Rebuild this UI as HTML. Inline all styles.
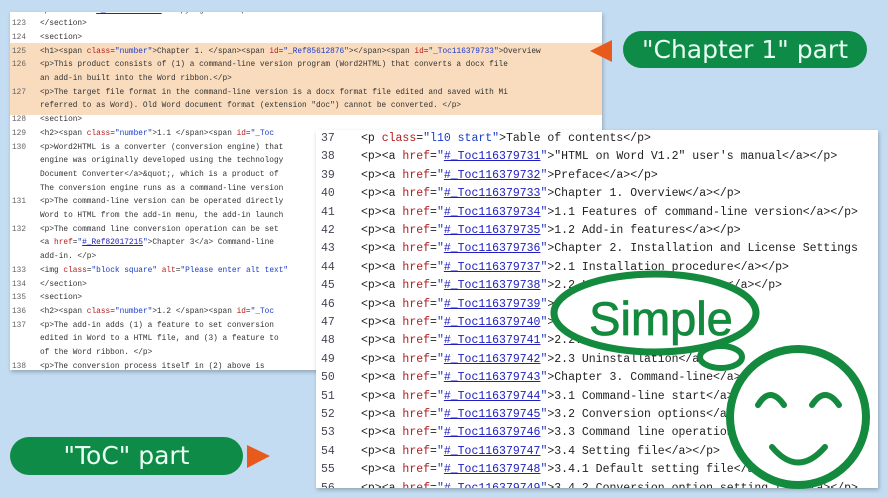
<!DOCTYPE html>
<html><head><meta charset="utf-8"><style>
body{margin:0;width:888px;height:497px;background:#c4dcf2;position:relative;overflow:hidden;font-family:"Liberation Mono",monospace}
.p{position:absolute;background:#fff;overflow:hidden;box-shadow:1px 2px 4px rgba(0,0,0,.25)}
#L{left:10px;top:12px;width:592px;height:358px}
#R{left:316px;top:130px;width:562px;height:358px}
.l{position:absolute;white-space:pre;color:#333}
#L .l{font-size:7.8px;height:13.7px;line-height:13.7px;left:30px}
#L .n{position:absolute;left:2px;font-size:7.8px;color:#666;line-height:13.7px}
#R .l{font-size:11.5px;line-height:18.4px;left:45px;color:#222}
#R .n{position:absolute;left:5px;font-size:11.5px;color:#445;line-height:18.4px}
.a{color:#b02020}.v{color:#1a3cc8}.u{color:#2020c0;text-decoration:underline}
.hl{position:absolute;left:0;top:31px;width:592px;height:72px;background:#f9dcbd}
.pill{position:absolute;background:#0e8c47;border-radius:20px;color:#e8fff4;font-family:"DejaVu Sans","Liberation Sans",sans-serif;text-align:center;font-size:25px;line-height:37px}
</style></head><body>
<div class="p" id="L">
<div class="hl"></div>
<div class="n" style="top:-7px">122</div><div class="l" style="top:-7px">&lt;p&gt;&lt;a href="<span class="u">#_Toc116379815</span>"&gt;Copyright&lt;/a&gt;&lt;/p&gt;</div>
<div class="n" style="top:6px">123</div><div class="l" style="top:6px">&lt;/section&gt;</div>
<div class="n" style="top:20px">124</div><div class="l" style="top:20px">&lt;section&gt;</div>
<div class="n" style="top:34px">125</div><div class="l" style="top:34px">&lt;h1&gt;&lt;span <span class="a">class</span>=<span class="v">"number"</span>&gt;Chapter 1. &lt;/span&gt;&lt;span <span class="a">id</span>=<span class="v">"_Ref85612876"</span>&gt;&lt;/span&gt;&lt;span <span class="a">id</span>=<span class="v">"_Toc116379733"</span>&gt;Overview</div>
<div class="n" style="top:47px">126</div><div class="l" style="top:47px">&lt;p&gt;This product consists of (1) a command-line version program (Word2HTML) that converts a docx file</div>
<div class="l" style="top:61px">an add-in built into the Word ribbon.&lt;/p&gt;</div>
<div class="n" style="top:75px">127</div><div class="l" style="top:75px">&lt;p&gt;The target file format in the command-line version is a docx format file edited and saved with Mi</div>
<div class="l" style="top:88px">referred to as Word). Old Word document format (extension "doc") cannot be converted. &lt;/p&gt;</div>
<div class="n" style="top:102px">128</div><div class="l" style="top:102px">&lt;section&gt;</div>
<div class="n" style="top:116px">129</div><div class="l" style="top:116px">&lt;h2&gt;&lt;span <span class="a">class</span>=<span class="v">"number"</span>&gt;1.1 &lt;/span&gt;&lt;span <span class="a">id</span>=<span class="v">"_Toc</span></div>
<div class="n" style="top:130px">130</div><div class="l" style="top:130px">&lt;p&gt;Word2HTML is a converter (conversion engine) that</div>
<div class="l" style="top:143px">engine was originally developed using the technology</div>
<div class="l" style="top:157px">Document Converter&lt;/a&gt;&amp;quot;, which is a product of</div>
<div class="l" style="top:171px">The conversion engine runs as a command-line version</div>
<div class="n" style="top:184px">131</div><div class="l" style="top:184px">&lt;p&gt;The command-line version can be operated directly</div>
<div class="l" style="top:198px">Word to HTML from the add-in menu, the add-in launch</div>
<div class="n" style="top:212px">132</div><div class="l" style="top:212px">&lt;p&gt;The command line conversion operation can be set</div>
<div class="l" style="top:225px">&lt;a <span class="a">href</span>=<span class="v">"</span><span class="u">#_Ref82017215</span><span class="v">"</span>&gt;Chapter 3&lt;/a&gt; Command-line</div>
<div class="l" style="top:239px">add-in. &lt;/p&gt;</div>
<div class="n" style="top:253px">133</div><div class="l" style="top:253px">&lt;img <span class="a">class</span>=<span class="v">"block square"</span> <span class="a">alt</span>=<span class="v">"Please enter alt text"</span></div>
<div class="n" style="top:267px">134</div><div class="l" style="top:267px">&lt;/section&gt;</div>
<div class="n" style="top:280px">135</div><div class="l" style="top:280px">&lt;section&gt;</div>
<div class="n" style="top:294px">136</div><div class="l" style="top:294px">&lt;h2&gt;&lt;span <span class="a">class</span>=<span class="v">"number"</span>&gt;1.2 &lt;/span&gt;&lt;span <span class="a">id</span>=<span class="v">"_Toc</span></div>
<div class="n" style="top:308px">137</div><div class="l" style="top:308px">&lt;p&gt;The add-in adds (1) a feature to set conversion</div>
<div class="l" style="top:321px">edited in Word to a HTML file, and (3) a feature to</div>
<div class="l" style="top:335px">of the Word ribbon. &lt;/p&gt;</div>
<div class="n" style="top:349px">138</div><div class="l" style="top:349px">&lt;p&gt;The conversion process itself in (2) above is</div>
</div>
<svg style="position:absolute;left:588px;top:38px" width="26" height="26"><polygon points="24,2 24,24 2,13" fill="#e85a1c"/></svg>
<div class="pill" style="left:623px;top:31px;width:244px;height:37px">"Chapter 1" part</div>
<div class="pill" style="left:10px;top:437px;width:233px;height:38px">"ToC" part</div>
<svg style="position:absolute;left:246px;top:444px" width="26" height="26"><polygon points="1,1 1,24 24,12" fill="#e85a1c"/></svg>
<div class="p" id="R">
<div class="n" style="top:0px">37</div><div class="l" style="top:0px">&lt;p <span class="a">class</span>=<span class="v">"l10 start"</span>&gt;Table of contents&lt;/p&gt;</div>
<div class="n" style="top:18.4px">38</div><div class="l" style="top:18.4px">&lt;p&gt;&lt;a <span class="a">href</span>=<span class="v">"<span class="u">#_Toc116379731</span>"</span>&gt;"HTML on Word V1.2" user's manual&lt;/a&gt;&lt;/p&gt;</div>
<div class="n" style="top:36.8px">39</div><div class="l" style="top:36.8px">&lt;p&gt;&lt;a <span class="a">href</span>=<span class="v">"<span class="u">#_Toc116379732</span>"</span>&gt;Preface&lt;/a&gt;&lt;/p&gt;</div>
<div class="n" style="top:55.2px">40</div><div class="l" style="top:55.2px">&lt;p&gt;&lt;a <span class="a">href</span>=<span class="v">"<span class="u">#_Toc116379733</span>"</span>&gt;Chapter 1. Overview&lt;/a&gt;&lt;/p&gt;</div>
<div class="n" style="top:73.6px">41</div><div class="l" style="top:73.6px">&lt;p&gt;&lt;a <span class="a">href</span>=<span class="v">"<span class="u">#_Toc116379734</span>"</span>&gt;1.1 Features of command-line version&lt;/a&gt;&lt;/p&gt;</div>
<div class="n" style="top:92px">42</div><div class="l" style="top:92px">&lt;p&gt;&lt;a <span class="a">href</span>=<span class="v">"<span class="u">#_Toc116379735</span>"</span>&gt;1.2 Add-in features&lt;/a&gt;&lt;/p&gt;</div>
<div class="n" style="top:110.4px">43</div><div class="l" style="top:110.4px">&lt;p&gt;&lt;a <span class="a">href</span>=<span class="v">"<span class="u">#_Toc116379736</span>"</span>&gt;Chapter 2. Installation and License Settings</div>
<div class="n" style="top:128.8px">44</div><div class="l" style="top:128.8px">&lt;p&gt;&lt;a <span class="a">href</span>=<span class="v">"<span class="u">#_Toc116379737</span>"</span>&gt;2.1 Installation procedure&lt;/a&gt;&lt;/p&gt;</div>
<div class="n" style="top:147.2px">45</div><div class="l" style="top:147.2px">&lt;p&gt;&lt;a <span class="a">href</span>=<span class="v">"<span class="u">#_Toc116379738</span>"</span>&gt;2.2 License registrations&lt;/a&gt;&lt;/p&gt;</div>
<div class="n" style="top:165.6px">46</div><div class="l" style="top:165.6px">&lt;p&gt;&lt;a <span class="a">href</span>=<span class="v">"<span class="u">#_Toc116379739</span>"</span>&gt;2.2.1 Trial&lt;/a&gt;&lt;/p&gt;</div>
<div class="n" style="top:184px">47</div><div class="l" style="top:184px">&lt;p&gt;&lt;a <span class="a">href</span>=<span class="v">"<span class="u">#_Toc116379740</span>"</span>&gt;2.2.2 License key&lt;/a&gt;&lt;/p&gt;</div>
<div class="n" style="top:202.4px">48</div><div class="l" style="top:202.4px">&lt;p&gt;&lt;a <span class="a">href</span>=<span class="v">"<span class="u">#_Toc116379741</span>"</span>&gt;2.2.3 Deactivation&lt;/a&gt;&lt;/p&gt;</div>
<div class="n" style="top:220.8px">49</div><div class="l" style="top:220.8px">&lt;p&gt;&lt;a <span class="a">href</span>=<span class="v">"<span class="u">#_Toc116379742</span>"</span>&gt;2.3 Uninstallation&lt;/a&gt;&lt;/p&gt;</div>
<div class="n" style="top:239.2px">50</div><div class="l" style="top:239.2px">&lt;p&gt;&lt;a <span class="a">href</span>=<span class="v">"<span class="u">#_Toc116379743</span>"</span>&gt;Chapter 3. Command-line&lt;/a&gt;&lt;/p&gt;</div>
<div class="n" style="top:257.6px">51</div><div class="l" style="top:257.6px">&lt;p&gt;&lt;a <span class="a">href</span>=<span class="v">"<span class="u">#_Toc116379744</span>"</span>&gt;3.1 Command-line start&lt;/a&gt;&lt;/p&gt;</div>
<div class="n" style="top:276px">52</div><div class="l" style="top:276px">&lt;p&gt;&lt;a <span class="a">href</span>=<span class="v">"<span class="u">#_Toc116379745</span>"</span>&gt;3.2 Conversion options&lt;/a&gt;&lt;/p&gt;</div>
<div class="n" style="top:294.4px">53</div><div class="l" style="top:294.4px">&lt;p&gt;&lt;a <span class="a">href</span>=<span class="v">"<span class="u">#_Toc116379746</span>"</span>&gt;3.3 Command line operation&lt;/a&gt;&lt;/p&gt;</div>
<div class="n" style="top:312.8px">54</div><div class="l" style="top:312.8px">&lt;p&gt;&lt;a <span class="a">href</span>=<span class="v">"<span class="u">#_Toc116379747</span>"</span>&gt;3.4 Setting file&lt;/a&gt;&lt;/p&gt;</div>
<div class="n" style="top:331.2px">55</div><div class="l" style="top:331.2px">&lt;p&gt;&lt;a <span class="a">href</span>=<span class="v">"<span class="u">#_Toc116379748</span>"</span>&gt;3.4.1 Default setting file&lt;/a&gt;&lt;/p&gt;</div>
<div class="n" style="top:349.6px">56</div><div class="l" style="top:349.6px">&lt;p&gt;&lt;a <span class="a">href</span>=<span class="v">"<span class="u">#_Toc116379749</span>"</span>&gt;3.4.2 Conversion option setting file&lt;/a&gt;&lt;/p&gt;</div>
</div>
<svg style="position:absolute;left:0;top:0" width="888" height="497">
<ellipse cx="655" cy="313" rx="101" ry="39" fill="#fff" stroke="#138a3e" stroke-width="7"/>
<ellipse cx="721" cy="357" rx="21" ry="11" fill="#fff" stroke="#138a3e" stroke-width="6"/>
<text x="661" y="335" text-anchor="middle" font-family="Liberation Sans, sans-serif" font-size="47" fill="#138a3e" stroke="#138a3e" stroke-width="0.8">Simple</text>
<circle cx="798" cy="417" r="68" fill="#fff" stroke="#138a3e" stroke-width="8"/>
<path d="M758 405 Q770 385 784 405" fill="none" stroke="#138a3e" stroke-width="6" stroke-linecap="round"/>
<path d="M812 405 Q825 385 839 405" fill="none" stroke="#138a3e" stroke-width="6" stroke-linecap="round"/>
<path d="M772 447 Q798 478 825 447" fill="none" stroke="#138a3e" stroke-width="6" stroke-linecap="round"/>
</svg>
</body></html>
